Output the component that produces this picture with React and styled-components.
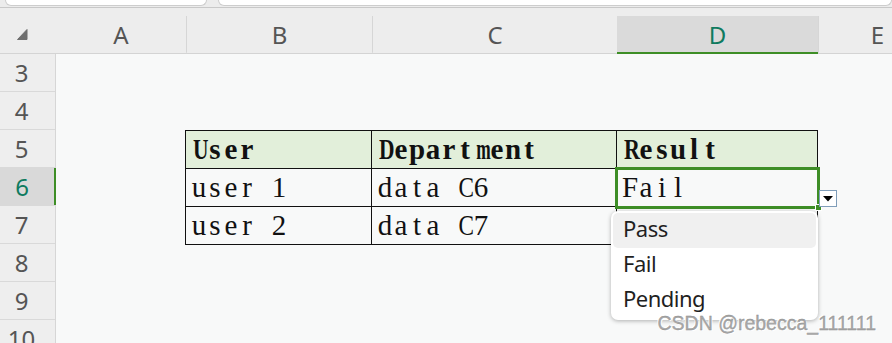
import React from 'react';
import styled, {createGlobalStyle} from 'styled-components';

const GlobalStyle = createGlobalStyle`
  html, body {
    margin: 0;
    padding: 0;
    background: #ededed;
  }
`

const green = '#3e8e26'

const Page = styled.div`
  position: relative;
  width: 892px;
  height: 343px;
  overflow: hidden;
  background: #f8f9f9;
  font-family: "Noto Sans", "Open Sans", sans-serif;
`

const TopStrip = styled.div`
  display: flex;
  gap: 11px;
  height: 8px;
  padding-left: 5px;
  background: #ececec;
  border-bottom: 1px solid #c8c8c8;
  box-sizing: border-box;
`

const TopBox = styled.div`
  width: ${p => p.width || 'auto'};
  flex: ${p => p.grow ? 1 : 'none'};
  height: 7px;
  background: #fff;
  border: 1px solid #cdcdcd;
  border-top: none;
  border-radius: 0 0 6px 6px;
  box-sizing: border-box;
  margin-top: -1px;
`

const HeaderRow = styled.div`
  display: grid;
  grid-template-columns: 56px 130px 186px 245px 201px 118px;
  height: 46px;
  background: #ededed;
  border-bottom: 1px solid #d4d4d4;
  box-sizing: border-box;
`

const Corner = styled.div`
  display: flex;
  align-items: center;
  justify-content: center;
  padding: 8px 12px 0 0;
`

const ColHead = styled.div`
  display: flex;
  align-items: center;
  justify-content: center;
  margin-top: 8px;
  font-size: 24px;
  color: ${p => p.active ? '#0f7b5f' : '#555'};
  background: ${p => p.active ? '#dadada' : 'transparent'};
  border-left: ${p => p.sep ? '1px solid #d6d6d6' : 'none'};
  border-bottom: ${p => p.active ? `2px solid ${green}` : '2px solid transparent'};
  margin-bottom: -1px;
  box-sizing: border-box;
`

const Body = styled.div`
  display: flex;
  height: 297px;
`

const RowHeads = styled.div`
  display: flex;
  flex-direction: column;
  width: 56px;
  flex: none;
  background: #eeeeee;
  border-right: 1px solid #d6d6d6;
  box-sizing: border-box;
`

const RowHead = styled.div`
  height: 38px;
  flex: none;
  display: flex;
  align-items: center;
  justify-content: center;
  padding-right: 12px;
  font-size: 24px;
  color: ${p => p.active ? '#0f7b5f' : '#555'};
  background: ${p => p.active ? '#d9d9d9' : 'transparent'};
  border-bottom: 1px solid #d9d9d9;
  box-shadow: ${p => p.active ? `inset -2px 0 0 ${green}` : 'none'};
  margin-right: ${p => p.active ? '-1px' : '0'};
  box-sizing: border-box;
`

const Sheet = styled.div`
  flex: 1;
  padding: 76px 0 0 129px;
`

const Table = styled.table`
  border-collapse: collapse;
  font-family: "Liberation Serif", "DejaVu Serif", serif;
  font-size: 29px;
  color: #111;
`

const Cell = styled.td`
  position: relative;
  width: ${p => p.w}px;
  height: 37px;
  padding: 0 0 0 5px;
  border: 1px solid #111;
  box-sizing: border-box;
  background: ${p => p.head ? '#e2efda' : 'transparent'};
  font-weight: ${p => p.head ? 'bold' : 'normal'};
  line-height: 37px;
  vertical-align: middle;
  white-space: nowrap;
`

// each character in a fixed slot, like the half-width latin of a CJK font
const Glyph = styled.span`
  display: inline-block;
  width: 16px;
  text-align: center;
  transform: scaleX(${p => p.squeeze});
`

// wide letters get narrowed to fit their slot
const squeezeOf = {m: 0.6, D: 0.74, C: 0.8, U: 0.74, R: 0.76, M: 0.6, w: 0.72}

const Mono = ({text}) => (
  <span>
    {text.split('').map((ch, i) => (
      <Glyph key={i} squeeze={squeezeOf[ch] || 1}>{ch === ' ' ? '\u00a0' : ch}</Glyph>
    ))}
  </span>
)

const Selection = styled.div`
  position: absolute;
  top: -2px;
  left: -2px;
  right: -3px;
  bottom: -3px;
  border: 3px solid ${green};
  pointer-events: none;

  &::after {
    content: '';
    position: absolute;
    right: -5px;
    bottom: -5px;
    width: 5px;
    height: 5px;
    background: ${green};
    border: 1px solid #fff;
  }
`

const ArrowButton = styled.div`
  position: absolute;
  left: 202px;
  top: 21px;
  width: 18px;
  height: 17px;
  display: flex;
  align-items: center;
  justify-content: center;
  background: #fff;
  border: 1px solid #7f9db9;
  box-sizing: border-box;
`

const Menu = styled.div`
  position: absolute;
  left: -6px;
  top: 42px;
  width: 207px;
  padding: 2px;
  background: #fff;
  border-radius: 7px;
  box-shadow: 0 1px 4px rgba(0,0,0,0.3);
  box-sizing: border-box;
  font-family: "Noto Sans", "Open Sans", sans-serif;
  font-weight: normal;
  font-size: 22px;
  letter-spacing: -0.5px;
  line-height: normal;
  z-index: 2;
`

const MenuItem = styled.div`
  height: 35px;
  display: flex;
  align-items: center;
  padding: 0 0 5px 10px;
  box-sizing: border-box;
  border-radius: 5px;
  color: #1f1f1f;
  background: ${p => p.hover ? '#f0f0f0' : 'transparent'};
`

const Watermark = styled.div`
  position: absolute;
  right: 16px;
  bottom: 8px;
  font-family: "Liberation Sans", Arial, sans-serif;
  font-size: 19.5px;
  color: #a8a8a8;
  text-shadow: 0 0 1px #fff, 1px 1px 0 #fff, -1px -1px 0 #fff;
  -webkit-text-stroke: 0.3px #8a8a8a;
  z-index: 3;
`

const columns = [
  {label: 'A'},
  {label: 'B', sep: true},
  {label: 'C', sep: true},
  {label: 'D', active: true},
  {label: 'E', sep: true},
]

const rows = [3, 4, 5, 6, 7, 8, 9, 10]

const data = [
  ['user 1', 'data C6', 'Fail'],
  ['user 2', 'data C7', ''],
]

const widths = [186, 245, 201]

const App = () => {
  return (
    <Page>
      <GlobalStyle />
      <TopStrip>
        <TopBox width="202px" />
        <TopBox grow />
      </TopStrip>
      <HeaderRow>
        <Corner>
          <svg width="11" height="11" viewBox="0 0 11 11">
            <path d="M10 0.5 L10 10.5 L0.5 10.5 Z" fill="#6f6f6f" strokeLinejoin="round" stroke="#6f6f6f" strokeWidth="1" />
          </svg>
        </Corner>
        {columns.map(c => (
          <ColHead key={c.label} sep={c.sep} active={c.active}>{c.label}</ColHead>
        ))}
      </HeaderRow>
      <Body>
        <RowHeads>
          {rows.map(r => (
            <RowHead key={r} active={r === 6}>{r}</RowHead>
          ))}
        </RowHeads>
        <Sheet>
          <Table>
            <tbody>
              <tr>
                <Cell head w={widths[0]}><Mono text="User" /></Cell>
                <Cell head w={widths[1]}><Mono text="Department" /></Cell>
                <Cell head w={widths[2]}><Mono text="Result" /></Cell>
              </tr>
              {data.map((row, i) => (
                <tr key={i}>
                  <Cell w={widths[0]}><Mono text={row[0]} /></Cell>
                  <Cell w={widths[1]}><Mono text={row[1]} /></Cell>
                  <Cell w={widths[2]}>
                    <Mono text={row[2]} />
                    {i === 0 && (
                      <>
                        <Selection />
                        <ArrowButton>
                          <svg width="10" height="6" viewBox="0 0 10 6">
                            <path d="M0 0 L10 0 L5 5.5 Z" fill="#000" />
                          </svg>
                        </ArrowButton>
                        <Menu>
                          <MenuItem hover>Pass</MenuItem>
                          <MenuItem>Fail</MenuItem>
                          <MenuItem>Pending</MenuItem>
                        </Menu>
                      </>
                    )}
                  </Cell>
                </tr>
              ))}
            </tbody>
          </Table>
        </Sheet>
      </Body>
      <Watermark>CSDN @rebecca_111111</Watermark>
    </Page>
  )
}

export default App;
